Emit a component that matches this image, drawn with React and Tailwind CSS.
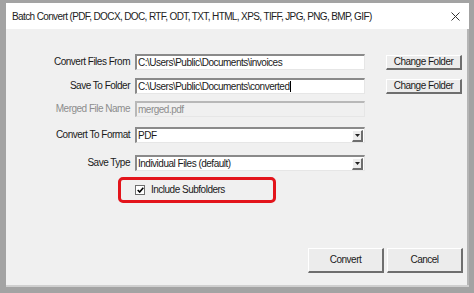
import React from 'react';

const font = { fontFamily: '"Liberation Sans", Arial, sans-serif' };

const sunken = 'bg-white border-t-2 border-l-2 border-t-[#8a8a8a] border-l-[#8a8a8a] border-b border-r border-b-[#e6e6e6] border-r-[#e6e6e6]';
const raised = 'bg-[#ececec] border-t border-l border-t-white border-l-white border-b-2 border-r-2 border-b-[#6e6e6e] border-r-[#6e6e6e]';
const txt = 'text-[10px] leading-none tracking-[-0.5px]';

const Label = ({ children, disabled }) => (
  <div className={`w-[129px] pr-[5px] text-right ${txt} ${disabled ? 'text-[#8d8d8d]' : 'text-[#1a1a1a]'}`}>
    {children}
  </div>
);

const TextBox = ({ value, cursor, disabled }) => (
  <div className={`w-[230px] h-[16px] flex items-center pl-px ${txt} ${disabled ? 'bg-[#f0f0f0] border-t-2 border-l-2 border-t-[#b8b8b8] border-l-[#b8b8b8] border-b border-r border-b-[#e6e6e6] border-r-[#e6e6e6] text-[#8d8d8d]' : sunken + ' text-[#1a1a1a]'}`}>
    {value}
    {cursor && <span className="w-px h-[11px] bg-black ml-px" />}
  </div>
);

const Select = ({ value }) => (
  <div className={`w-[230px] h-[16px] flex items-center pl-px ${txt} text-[#1a1a1a] ${sunken}`}>
    <span className="flex-1">{value}</span>
    <span className={`w-[11px] h-[12px] mr-px flex items-center justify-center ${raised}`}>
      <svg width="5" height="3" viewBox="0 0 5 3"><path d="M0 0h5L2.5 3z" fill="#222" /></svg>
    </span>
  </div>
);

const Button = ({ children, className }) => (
  <div className={`flex items-center justify-center ${txt} text-[#1a1a1a] ${raised} ${className}`}>
    {children}
  </div>
);

export default function App() {
  return (
    <div className="w-[474px] h-[293px] bg-[#a3a3a3] pt-[3px] pl-[6px] overflow-hidden" style={font}>
      <div className="w-[463px] h-[284px] flex flex-col border-b-2 border-[#cfcfcf]">
        <div className="h-[26px] bg-white flex items-center pl-[6px] pr-[9px] shrink-0">
          <span className="flex-1 text-[10px] tracking-[-0.62px] text-[#222]">
            Batch Convert (PDF, DOCX, DOC, RTF, ODT, TXT, HTML, XPS, TIFF, JPG, PNG, BMP, GIF)
          </span>
          <svg width="9" height="9" viewBox="0 0 9 9"><path d="M0.5 0.5l8 8M8.5 0.5l-8 8" stroke="#333" strokeWidth="1" /></svg>
        </div>
        <div className="flex-1 bg-[#f0f0f0] flex flex-col pt-[25px] border-r-2 border-[#b5b5b5]">
          <div className="flex items-center h-[16px]">
            <Label>Convert Files From</Label>
            <TextBox value="C:\Users\Public\Documents\invoices" />
            <Button className="ml-[21px] w-[76px] h-[15px]">Change Folder</Button>
          </div>
          <div className="flex items-center h-[16px] mt-[8px]">
            <Label>Save To Folder</Label>
            <TextBox value="C:\Users\Public\Documents\converted" cursor />
            <Button className="ml-[21px] w-[76px] h-[15px]">Change Folder</Button>
          </div>
          <div className="flex items-center h-[16px] mt-[7px]">
            <Label disabled>Merged File Name</Label>
            <TextBox value="merged.pdf" disabled />
          </div>
          <div className="flex items-center h-[16px] mt-[10px]">
            <Label>Convert To Format</Label>
            <Select value="PDF" />
          </div>
          <div className="flex items-center h-[16px] mt-[12px]">
            <Label>Save Type</Label>
            <Select value="Individual Files (default)" />
          </div>
          <div className="ml-[112px] mt-[6px] w-[158px] h-[26px] border-[3px] border-[#e3141b] rounded-[5px] flex items-center pl-[14px]">
            <span className="w-[10px] h-[10px] bg-white border border-[#6e6e6e] flex items-center justify-center">
              <svg width="7" height="6" viewBox="0 0 7 6"><path d="M0.7 3l2 2L6.3 0.8" stroke="#000" strokeWidth="1.6" fill="none" /></svg>
            </span>
            <span className={`ml-[6px] ${txt} text-[#1a1a1a]`}>Include Subfolders</span>
          </div>
          <div className="flex-1" />
          <div className="flex justify-end gap-[3px] pr-[4px] mb-[12px]">
            <Button className="w-[76px] h-[25px]">Convert</Button>
            <Button className="w-[76px] h-[25px]">Cancel</Button>
          </div>
        </div>
      </div>
    </div>
  );
}
